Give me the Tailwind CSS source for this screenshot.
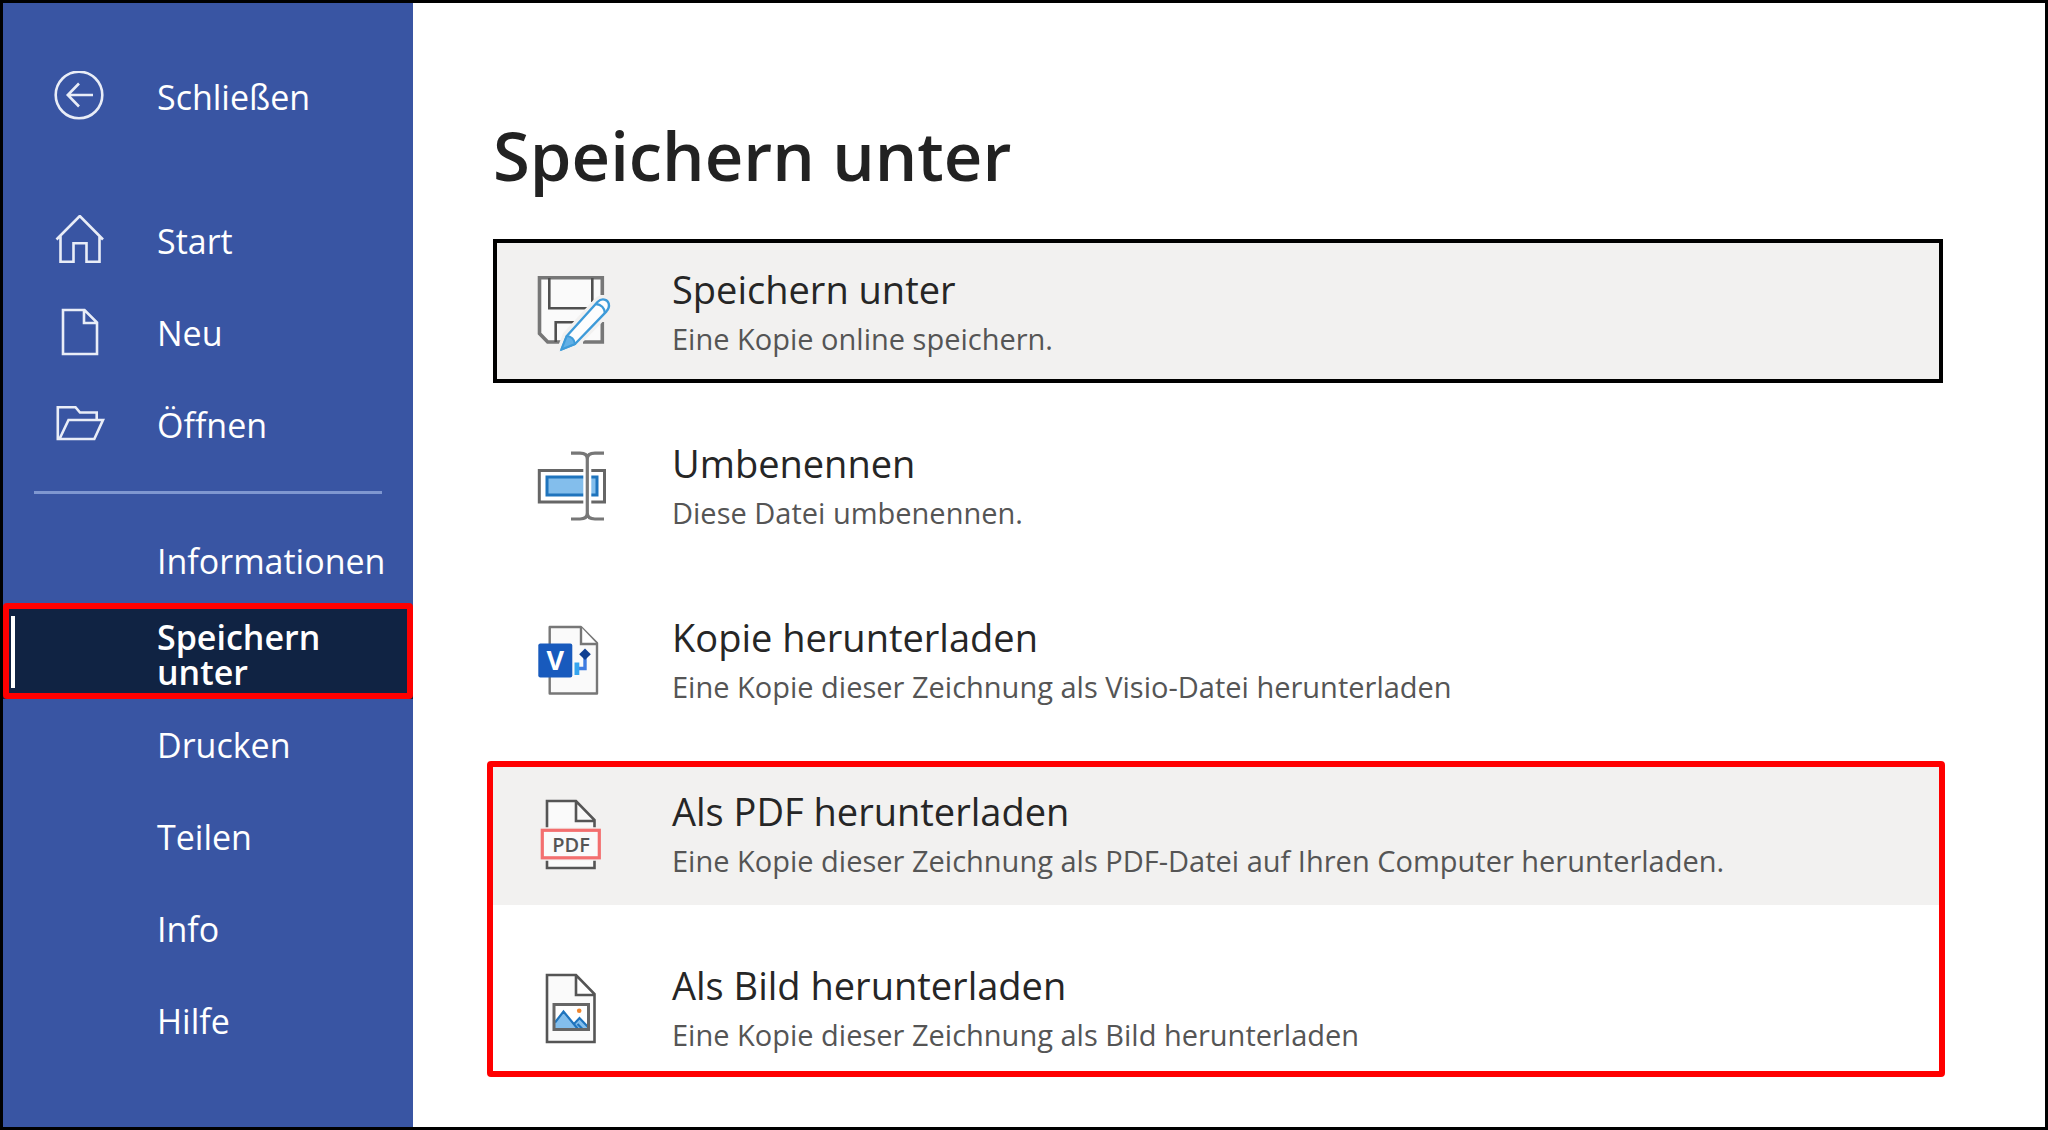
<!DOCTYPE html>
<html lang="de">
<head>
    <meta charset="UTF-8">
    <meta name="viewport" content="width=device-width, initial-scale=1.0">
    <title>Speichern unter</title>
    <script src="https://cdn.jsdelivr.net/npm/@tailwindcss/browser@4"></script>
</head>
<body class="flex min-h-screen border-[3px] border-black bg-white font-['Open_Sans','Noto_Sans',sans-serif]">

    <!-- Sidebar -->
    <nav class="w-[410px] shrink-0 bg-[#3955a3] pt-12 text-[34px] leading-[35px] text-white">
        <a href="#" class="mb-[52px] flex h-[92px] items-center gap-[52px] pl-[50px]">
            <svg class="size-[52px] shrink-0" viewBox="0 0 52 52" fill="none" stroke="#e9edf7" stroke-width="2.6">
                <circle cx="26" cy="24" r="23.3"/>
                <path d="M40 24H15M26 12.5L14.8 24L26 35.5"/>
            </svg>
            Schließen
        </a>
        <a href="#" class="flex h-[92px] items-center gap-[52px] pl-[50px]">
            <svg class="size-[52px] shrink-0" viewBox="0 0 52 52" fill="none" stroke="#e9edf7" stroke-width="2.6">
                <path d="M3.5 24.5L26.8 1L50 24.5M7.5 21V46.8H20.5V28.3H33.5V46.8H46.5V21"/>
            </svg>
            Start
        </a>
        <a href="#" class="flex h-[92px] items-center gap-[52px] pl-[50px]">
            <svg class="size-[52px] shrink-0" viewBox="0 0 52 52" fill="none" stroke="#e9edf7" stroke-width="2.6">
                <path d="M10 3H31.5L44 15.5V47H10ZM31 3V16H44"/>
            </svg>
            Neu
        </a>
        <a href="#" class="flex h-[92px] items-center gap-[52px] pl-[50px]">
            <svg class="size-[52px] shrink-0" viewBox="0 0 52 52" fill="none" stroke="#e9edf7" stroke-width="2.6">
                <path d="M43.7 21V13.5H27L22.5 8.2H4.8V40H41.3L50 21H15.5L6.5 40"/>
            </svg>
            Öffnen
        </a>

        <hr class="mx-[31px] mt-5 mb-[21px] border-t-[3px] border-[#7f97d0]">

        <a href="#" class="flex h-[92px] items-center pl-[154px]">Informationen</a>
        <a href="#" aria-current="page" class="relative flex h-[92px] items-center bg-[#102343] pt-1 pr-16 pl-[154px] font-semibold">
            <span class="absolute top-[9px] left-2 h-[72px] w-1 bg-white"></span>
            Speichern unter
            <span class="absolute inset-x-0 -top-1 bottom-0 rounded-sm border-[6px] border-[#ff0000]"></span>
        </a>
        <a href="#" class="flex h-[92px] items-center pl-[154px]">Drucken</a>
        <a href="#" class="flex h-[92px] items-center pl-[154px]">Teilen</a>
        <a href="#" class="flex h-[92px] items-center pl-[154px]">Info</a>
        <a href="#" class="flex h-[92px] items-center pl-[154px]">Hilfe</a>
    </nav>

    <!-- Content -->
    <main class="flex-1 pt-[104px] pr-[102px] pl-20">
        <h1 class="mb-9 text-[67px] leading-[96px] font-semibold text-[#222]">Speichern unter</h1>

        <div class="flex flex-col gap-[30px]">
            <button type="button" class="flex h-36 items-center gap-[57px] bg-[#f2f1f0] pl-[42px] text-left ring-4 ring-black ring-inset">
                <svg class="size-20 shrink-0 overflow-visible" viewBox="0 0 80 80" fill="none">
                    <path d="M4.5 6.8H67.3V71H12.7L4.5 62.5Z" fill="#fafafa"/>
                    <path d="M67.3 24V6.8H4.5V62.5L12.7 71H31M67.3 51V71H48" stroke="#777" stroke-width="3.6"/>
                    <path d="M14.3 7V37.3H52M57.3 7V31M20.7 71V51.3H40" stroke="#505050" stroke-width="2.6"/>
                    <path d="M25.7 79.5L31.5 64.5L62.5 30.5C67 26 72.5 28 74 32C75 35 74 38 72 40.5L40.5 73Z" fill="#fff" stroke="#f2f1f0" stroke-width="8"/>
                    <path d="M26.5 78.5L31.8 65L62.5 31C67 26.5 72.5 28.5 73.7 32.5C74.5 35.5 73.5 38 71.5 40.3L40 73Z" fill="#fdfdfd" stroke="#3e9bd9" stroke-width="2.4" stroke-linejoin="round"/>
                    <path d="M26.5 78.5L31.8 65C36 65 39.5 68.5 40 73Z" fill="#62b0e6" stroke="#3e9bd9" stroke-width="2"/>
                    <path d="M61 33C66 33.5 69.500 37 70 42" stroke="#3e9bd9" stroke-width="2.4"/>
                </svg>
                <span>
                    <span class="block text-[38px] leading-[56px] text-[#262626]">Speichern unter</span>
                    <span class="block text-[29px] leading-[44px] text-[#555]">Eine Kopie online speichern.</span>
                </span>
            </button>

            <button type="button" class="flex h-36 items-center gap-[57px] pl-[42px] text-left">
                <svg class="size-20 shrink-0" viewBox="0 0 80 80" fill="none">
                    <rect x="4.3" y="25.5" width="65.2" height="31.5" fill="#fff" stroke="#666" stroke-width="3"/>
                    <rect x="12" y="32" width="50" height="18" fill="#83beec" stroke="#1f74bd" stroke-width="3"/>
                    <path d="M52.3 12V70" stroke="#fff" stroke-width="8"/>
                    <path d="M36 8.2H45C49.5 8.2 52.3 10 52.3 14V68C52.3 72 49.5 74 45 74H36M69 8.2H60C55.5 8.2 52.3 10 52.3 14M52.3 68C52.3 72 55.5 74 60 74H69" stroke="#777" stroke-width="3.2"/>
                </svg>
                <span>
                    <span class="block text-[38px] leading-[56px] text-[#262626]">Umbenennen</span>
                    <span class="block text-[29px] leading-[44px] text-[#555]">Diese Datei umbenennen.</span>
                </span>
            </button>

            <button type="button" class="flex h-36 items-center gap-[57px] pl-[42px] text-left">
                <svg class="size-20 shrink-0" viewBox="0 0 80 80" fill="none">
                    <path d="M14.7 8H46L62 24V74.5H14.7Z" fill="#fafafa" stroke="#777" stroke-width="2.4" stroke-linejoin="round"/>
                    <path d="M46 8V25H62" fill="#fff" stroke="#777" stroke-width="2.4"/>
                    <path d="M50 38V49.5H42" stroke="#3f7be0" stroke-width="3.4"/>
                    <rect x="39.5" y="43.5" width="4.8" height="12.5" fill="#35a5ef"/>
                    <path d="M50 29.5L55.8 35.3L50 41L44.2 35.3Z" fill="#103f91"/>
                    <rect x="3.3" y="24.5" width="34" height="34" rx="2" fill="#185abd"/>
                    <text x="20.3" y="50.5" text-anchor="middle" font-size="27" font-weight="700" fill="#fff">V</text>
                </svg>
                <span>
                    <span class="block text-[38px] leading-[56px] text-[#262626]">Kopie herunterladen</span>
                    <span class="block text-[29px] leading-[44px] text-[#555]">Eine Kopie dieser Zeichnung als Visio-Datei herunterladen</span>
                </span>
            </button>

            <div class="relative flex flex-col gap-[30px]">
                <button type="button" class="flex h-36 items-center gap-[57px] bg-[#f2f1f0] pl-[42px] text-left">
                    <svg class="size-20 shrink-0" viewBox="0 0 80 80" fill="none">
                        <path d="M12 8H41L59.5 27V75H12Z" fill="#fafafa"/>
                        <path d="M12 34.5V8H41L59.5 27V34.5M41 8V28H59.5M12 67.5V75H59.5V67.5" stroke="#555" stroke-width="2.6"/>
                        <rect x="5" y="34.5" width="61.5" height="33" fill="#f2f1f0"/>
                        <rect x="7.3" y="37.3" width="57" height="27.5" fill="#fafafa" stroke="#f36f6f" stroke-width="3.2"/>
                        <text x="36" y="58.5" text-anchor="middle" font-size="20" font-weight="600" fill="#555">PDF</text>
                    </svg>
                    <span>
                        <span class="block text-[38px] leading-[56px] text-[#262626]">Als PDF herunterladen</span>
                        <span class="block text-[29px] leading-[44px] text-[#555]">Eine Kopie dieser Zeichnung als PDF-Datei auf Ihren Computer herunterladen.</span>
                    </span>
                </button>

                <button type="button" class="flex h-36 items-center gap-[57px] pl-[42px] text-left">
                    <svg class="size-20 shrink-0" viewBox="0 0 80 80" fill="none">
                        <path d="M12 8H41L59.5 27V75H12ZM41 8V28H59.5" fill="#fafafa" stroke="#555" stroke-width="2.6"/>
                        <rect x="19" y="37.5" width="34.5" height="25" fill="#fff"/>
                        <path d="M20 61V55L28.5 44.5L39.5 58L44.5 51.5L53 60V61Z" fill="#83beec"/>
                        <path d="M20 55.5L28.5 44.5L42.5 61.5M38.5 57.5L44.5 51L53 60M42.5 57L47.5 62" stroke="#1f74bd" stroke-width="2.2"/>
                        <rect x="19" y="37.5" width="34.5" height="25" stroke="#666" stroke-width="3"/>
                        <circle cx="44.2" cy="43.8" r="2.3" fill="#f0862d"/>
                    </svg>
                    <span>
                        <span class="block text-[38px] leading-[56px] text-[#262626]">Als Bild herunterladen</span>
                        <span class="block text-[29px] leading-[44px] text-[#555]">Eine Kopie dieser Zeichnung als Bild herunterladen</span>
                    </span>
                </button>

                <!-- Highlight around both downloads -->
                <div class="pointer-events-none absolute top-0 -right-0.5 bottom-0.5 -left-1.5 rounded-sm border-[6px] border-[#ff0000]"></div>
            </div>
        </div>
    </main>
</body>
</html>
